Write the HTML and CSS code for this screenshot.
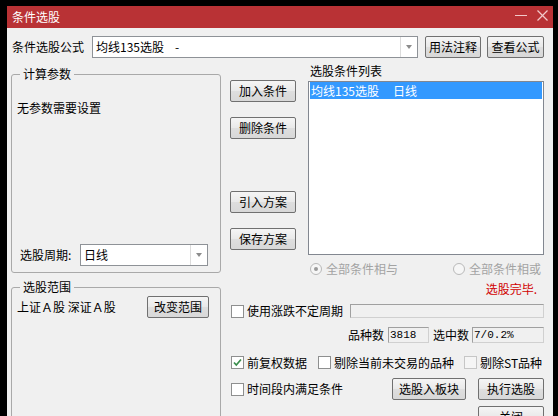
FILE: index.html
```html
<!DOCTYPE html>
<html>
<head>
	<meta charset="utf-8">
	<title>条件选股</title>
	<link rel="stylesheet" href="styles.css">
</head>
<body>
<div class="window">
	<div class="titlebar">
		<span class="title">条件选股</span>
		<svg class="caption" width="38" height="22" viewBox="0 0 38 22">
			<line x1="4" y1="9.5" x2="16" y2="9.5" stroke="#f2c9c9" stroke-width="1"/>
			<line x1="26.5" y1="4.5" x2="36.5" y2="14.5" stroke="#f2c9c9" stroke-width="1.2"/>
			<line x1="36.5" y1="4.5" x2="26.5" y2="14.5" stroke="#f2c9c9" stroke-width="1.2"/>
		</svg>
	</div>
	<div class="client">
		<div class="formula-row">
			<span class="formula-label">条件选股公式</span>
			<div class="combo combo-formula">
				<span class="combo-text">均线135选股<span class="dash">-</span></span>
				<span class="combo-arrow"></span>
			</div>
			<button class="btn btn-note">用法注释</button>
			<button class="btn btn-view">查看公式</button>
		</div>
		<div class="main">
			<div class="left-col">
				<div class="group group-params">
					<div class="group-title">计算参数</div>
					<div class="params-text">无参数需要设置</div>
					<div class="period-row">
						<span class="period-label">选股周期:</span>
						<div class="combo combo-period">
							<span class="combo-text">日线</span>
							<span class="combo-arrow"></span>
						</div>
					</div>
				</div>
				<div class="group group-range">
					<div class="group-title">选股范围</div>
					<div class="range-row">
						<span>上证Ａ股 深证Ａ股</span>
						<button class="btn btn-range">改变范围</button>
					</div>
				</div>
			</div>
			<div class="right-col">
				<div class="cond-area">
					<div class="cond-btns">
						<button class="btn">加入条件</button>
						<button class="btn">删除条件</button>
						<button class="btn btn-import">引入方案</button>
						<button class="btn">保存方案</button>
					</div>
					<div class="list-col">
						<div class="list-label">选股条件列表</div>
						<div class="cond-list">
							<div class="list-item selected">均线135选股<span class="gap">日线</span></div>
						</div>
						<div class="radio-row">
							<span class="radio-opt"><span class="radio checked"></span>全部条件相与</span>
							<span class="radio-opt"><span class="radio"></span>全部条件相或</span>
						</div>
					</div>
				</div>
				<div class="status">选股完毕.</div>
				<div class="row row-a">
					<span class="check"><span class="box"></span>使用涨跌不定周期</span>
					<span class="field field-period"></span>
				</div>
				<div class="row row-b">
					<span class="count-label">品种数</span>
					<span class="field field-total">3818</span>
					<span class="count-label label-hit">选中数</span>
					<span class="field field-hit">7/0.2%</span>
				</div>
				<div class="row row-c">
					<span class="check"><span class="box"><svg width="11" height="11" viewBox="0 0 11 11"><path d="M2 5.5 L4.3 8 L9 2.5" fill="none" stroke="#3a8d4c" stroke-width="1.7"/></svg></span>前复权数据</span>
					<span class="check check-trade"><span class="box"></span>剔除当前未交易的品种</span>
					<span class="check check-st"><span class="box box-light"></span>剔除ST品种</span>
				</div>
				<div class="row row-d">
					<span class="check"><span class="box"></span>时间段内满足条件</span>
					<button class="btn btn-block">选股入板块</button>
					<button class="btn btn-run">执行选股</button>
				</div>
				<div class="row row-e">
					<button class="btn btn-run">关闭</button>
				</div>
			</div>
		</div>
	</div>
</div>
</body>
</html>
```

FILE: styles.css
```css
*{
	margin:0px;
	padding:0px;
	box-sizing:border-box;
}
body{
	background:#000;
	width:558px;
	height:416px;
	overflow:hidden;
	font-family:"Noto Sans CJK SC",sans-serif;
	font-size:12px;
	line-height:14px;
	color:#000;
}
.window{
	margin:6px 0 0 7px;
	width:546px;
	height:410px;
	background:#f0f0f0;
	overflow:hidden;
}
.titlebar{
	height:22px;
	background:#b93235;
	display:flex;
	align-items:center;
	color:#fff;
}
.title{
	padding-left:5px;
}
.caption{
	display:block;
	margin-left:auto;
	margin-right:4px;
}
.client{
	padding-top:8px;
}
.formula-row{
	display:flex;
	align-items:center;
	height:22px;
	padding-left:5px;
}
.formula-label{
	width:80px;
}
.combo{
	display:flex;
	height:22px;
	background:#fff;
	border:1px solid #8e9297;
}
.combo-formula{
	width:326px;
}
.combo-text{
	flex:1;
	padding-left:3px;
	line-height:20px;
	white-space:nowrap;
}
.combo-text .dash{
	margin-left:11px;
}
.combo-arrow{
	width:17px;
	border-left:1px solid #dcdcdc;
	display:flex;
	align-items:center;
	justify-content:center;
}
.combo-arrow::after{
	content:"";
	border-left:3.5px solid transparent;
	border-right:3.5px solid transparent;
	border-top:4px solid #8c8c8c;
}
.btn{
	font:inherit;
	color:#000;
	height:22px;
	border:1px solid #707070;
	border-radius:2px;
	background:linear-gradient(#f5f5f5,#e9e9e9 50%,#dedede 51%,#d8d8d8);
	display:flex;
	align-items:center;
	justify-content:center;
	cursor:pointer;
}
.btn-note{
	width:56px;
	margin-left:7px;
}
.btn-view{
	width:57px;
	margin-left:6px;
}
.main{
	display:flex;
	margin-top:6px;
	padding-left:4px;
}
.left-col{
	width:210px;
}
.group{
	border:1px solid #a9a9a9;
	border-radius:3px;
	display:flex;
	flex-direction:column;
}
.group-title{
	align-self:flex-start;
	margin:-8px 0 0 8px;
	padding:0 3px;
	background:#f0f0f0;
}
.group-params{
	margin-top:10px;
	height:199px;
	padding-bottom:6px;
}
.params-text{
	margin-top:20px;
	padding-left:5px;
}
.period-row{
	margin-top:auto;
	display:flex;
	align-items:center;
	padding-left:8px;
}
.period-label{
	width:60px;
}
.combo-period{
	width:128px;
}
.group-range{
	margin-top:14px;
	height:150px;
}
.range-row{
	margin-top:2px;
	display:flex;
	align-items:center;
	height:22px;
	padding-left:5px;
}
.btn-range{
	width:62px;
	margin-left:auto;
	margin-right:11px;
}
.right-col{
	width:314px;
	margin-left:9px;
}
.cond-area{
	display:flex;
}
.cond-btns{
	width:66px;
	display:flex;
	flex-direction:column;
}
.cond-btns .btn{
	width:66px;
	margin-top:15px;
}
.cond-btns .btn:first-child{
	margin-top:16px;
}
.cond-btns .btn-import{
	margin-top:52px;
}
.list-col{
	width:236px;
	margin-left:12px;
}
.list-label{
	padding-left:2px;
}
.cond-list{
	margin-top:3px;
	height:174px;
	background:#fff;
	border:1px solid #828790;
	padding:0 1px;
}
.list-item{
	height:17px;
	line-height:17px;
	padding-left:1px;
	white-space:nowrap;
}
.list-item.selected{
	background:#3399ff;
	color:#fff;
}
.list-item .gap{
	margin-left:14px;
}
.radio-row{
	margin-top:7px;
	display:flex;
	justify-content:space-between;
	padding:0 3px 0 2px;
	color:#a3a3a3;
}
.radio-opt{
	display:flex;
	align-items:center;
}
.radio{
	width:12px;
	height:12px;
	border-radius:50%;
	border:1px solid #b9b9b9;
	background:#f6f6f6;
	margin-right:4px;
	display:flex;
	align-items:center;
	justify-content:center;
}
.radio.checked::after{
	content:"";
	width:4px;
	height:4px;
	border-radius:50%;
	background:#9a9a9a;
}
.status{
	margin-top:6px;
	text-align:right;
	padding-right:7px;
	color:#d00000;
}
.row{
	display:flex;
	align-items:center;
}
.check{
	display:flex;
	align-items:center;
	white-space:nowrap;
}
.box{
	width:13px;
	height:13px;
	border:1px solid #8e8f8f;
	background:#fff;
	margin-right:3px;
}
.box svg{
	display:block;
}
.box-light{
	border-color:#c6c6c6;
	background:#f5f5f5;
}
.field{
	height:14px;
	background:#f0f0f0;
	border:1px solid #d0d0d0;
	border-left-color:#a0a0a0;
	border-top-color:#a0a0a0;
	font-family:"Liberation Mono",monospace;
	font-size:11px;
	line-height:14px;
	padding-left:1px;
}
.row-a{
	margin-top:7px;
	height:15px;
	padding-left:1px;
}
.row-a .check{
	padding-top:1px;
}
.field-period{
	margin-left:auto;
	width:194px;
}
.row-b{
	margin-top:9px;
	height:16px;
	justify-content:flex-end;
}
.count-label{
	margin-right:4px;
}
.label-hit{
	margin-left:4px;
	margin-right:3px;
}
.field-total{
	width:41px;
	height:16px;
}
.field-hit{
	width:72px;
	height:16px;
}
.row-c{
	margin-top:12px;
	height:15px;
	padding-left:1px;
}
.check-trade{
	margin-left:11px;
}
.check-st{
	margin-left:10px;
}
.row-d{
	margin-top:8px;
	height:22px;
	padding-left:1px;
}
.btn-block{
	width:74px;
	margin-left:auto;
}
.btn-run{
	width:66px;
	margin-left:12px;
}
.row-e{
	margin-top:6px;
	justify-content:flex-end;
}
```
